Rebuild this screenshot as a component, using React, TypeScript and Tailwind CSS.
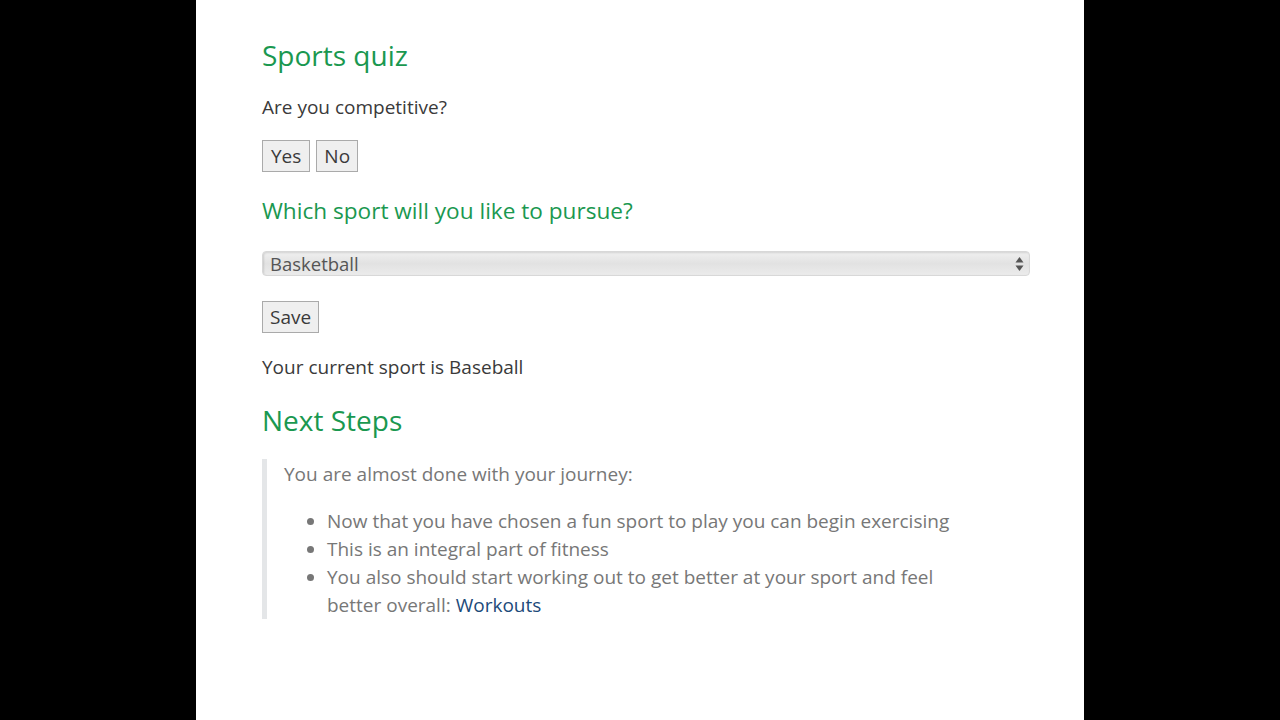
export default function App() {
  const steps = [
    'Now that you have chosen a fun sport to play you can begin exercising',
    'This is an integral part of fitness',
  ]

  return (
    <div className="min-h-[720px] bg-black flex justify-center" style={{ fontFamily: '"Open Sans", sans-serif' }}>
      <div className="w-[888px] min-h-[720px] bg-white pl-[66px] pr-[54px] pt-[36px] text-[#3a3a3a]">
        <h1 className="text-[28px] leading-[38px] text-[#1a9850]">Sports quiz</h1>
        <p className="mt-[19px] text-[19px] leading-[28px]">Are you competitive?</p>
        <div className="mt-[19px] flex gap-[6px]">
          <button className="h-[32px] px-[8px] text-[19px] leading-none border border-[#aaa] bg-[#efefef] text-[#3a3a3a]">Yes</button>
          <button className="h-[32px] px-[7px] text-[19px] leading-none border border-[#aaa] bg-[#efefef] text-[#3a3a3a]">No</button>
        </div>
        <h2 className="mt-[24px] text-[22.6px] leading-[30px] text-[#1a9850]">Which sport will you like to pursue?</h2>
        <div className="mt-[25px] relative h-[25px] w-[768px] rounded-[4px] border border-[#d8d8d8] bg-gradient-to-b from-[#f0f0f0] via-[#e2e2e2] to-[#ebebeb] shadow-[inset_1px_1px_2px_rgba(0,0,0,0.12)]">
          <span className="absolute left-[7px] top-0 text-[18.5px] leading-[23px] text-[#555]">Basketball</span>
          <svg className="absolute right-[5px] top-[4px]" width="9" height="16" viewBox="0 0 9 16">
            <path d="M4.5 1 L8.5 6.5 L0.5 6.5 Z" fill="#555" />
            <path d="M4.5 15 L8.5 9.5 L0.5 9.5 Z" fill="#555" />
          </svg>
        </div>
        <button className="mt-[25px] h-[32px] px-[7px] text-[19px] leading-none border border-[#aaa] bg-[#efefef] text-[#3a3a3a]">Save</button>
        <p className="mt-[20px] text-[19px] leading-[28px]">Your current sport is Baseball</p>
        <h2 className="mt-[21px] text-[28px] leading-[36px] text-[#1a9850]">Next Steps</h2>
        <blockquote className="mt-[21px] w-[768px] border-l-[5px] border-[#e4e6e8] pl-[17px] text-[19px] leading-[28px] text-[#777]">
          <p className="pt-[1px]">You are almost done with your journey:</p>
          <ul className="mt-[19px] list-disc pl-[43px] marker:text-[#777]">
            {steps.map((s) => (
              <li key={s}>{s}</li>
            ))}
            <li className="pr-[60px]">
              You also should start working out to get better at your sport and feel better overall:{' '}
              <a href="#" className="text-[#1c4a7a]">Workouts</a>
            </li>
          </ul>
        </blockquote>
      </div>
    </div>
  )
}
